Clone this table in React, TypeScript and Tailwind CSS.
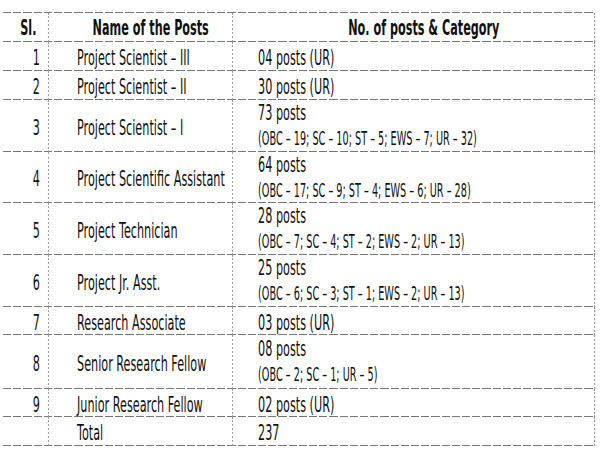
const rows = [
  { sl: '1', name: 'Project Scientist – III', posts: '04 posts (UR)', h: 'h-[29px]' },
  { sl: '2', name: 'Project Scientist – II', posts: '30 posts (UR)', h: 'h-[29px]' },
  {
    sl: '3',
    name: 'Project Scientist – I',
    posts: '73 posts',
    cat: '(OBC – 19; SC – 10; ST – 5; EWS – 7; UR – 32)',
    h: 'h-[52px]',
  },
  {
    sl: '4',
    name: 'Project Scientific Assistant',
    posts: '64 posts',
    cat: '(OBC – 17; SC – 9; ST – 4; EWS – 6; UR – 28)',
    h: 'h-[51px]',
  },
  {
    sl: '5',
    name: 'Project Technician',
    posts: '28 posts',
    cat: '(OBC – 7; SC – 4; ST – 2; EWS – 2; UR – 13)',
    h: 'h-[52px]',
  },
  {
    sl: '6',
    name: 'Project Jr. Asst.',
    posts: '25 posts',
    cat: '(OBC – 6; SC – 3; ST – 1; EWS – 2; UR – 13)',
    h: 'h-[52px]',
  },
  { sl: '7', name: 'Research Associate', posts: '03 posts (UR)', h: 'h-[28px]' },
  {
    sl: '8',
    name: 'Senior Research Fellow',
    posts: '08 posts',
    cat: '(OBC – 2; SC – 1; UR – 5)',
    h: 'h-[54px]',
  },
  { sl: '9', name: 'Junior Research Fellow', posts: '02 posts (UR)', h: 'h-[28px]' },
  { sl: '', name: 'Total', posts: '237', h: 'h-[29px]' },
]

// dashed rule drawn along the bottom of each row
const rule =
  'bg-[repeating-linear-gradient(90deg,#777_0_16px,transparent_16px_20px)] bg-[length:100%_1px] bg-bottom bg-no-repeat'

function App() {
  return (
    <div className="h-[450px] w-[600px] overflow-hidden bg-white">
      <div className="w-[1177px] origin-top-left scale-x-[0.51] pt-[12px] pl-[6px] font-['DejaVu_Sans',sans-serif] text-[#111]">
        <div className="h-px w-[1161px] bg-[repeating-linear-gradient(90deg,#777_0_16px,transparent_16px_20px)]" />
        <div className={`flex h-[29px] w-[1161px] text-[22px] font-bold ${rule}`}>
          <div className="flex w-[90px] items-center justify-center border-r-2 border-dotted border-[#9a9a9a] pl-[11px]">
            Sl.
          </div>
          <div className="flex w-[361px] items-center justify-center border-r-2 border-dotted border-[#9a9a9a] pl-[40px]">
            Name of the Posts
          </div>
          <div className="flex w-[710px] items-center justify-center border-r-2 border-dotted border-[#8a8a8a] pl-[40px]">
            No. of posts &amp; Category
          </div>
        </div>
        {rows.map((r, i) => (
          <div key={i} className={`flex w-[1161px] text-[22px] ${r.h} ${rule}`}>
            <div className="flex w-[90px] items-center justify-end border-r-2 border-dotted border-[#9a9a9a] pr-[16px] pt-[2px]">
              {r.sl}
            </div>
            <div className="flex w-[361px] items-center border-r-2 border-dotted border-[#9a9a9a] pl-[55px] pt-[2px]">
              {r.name}
            </div>
            <div
              className={`flex w-[710px] flex-col justify-center border-r-2 border-dotted border-[#8a8a8a] pl-[49px] ${r.cat ? 'pb-[1px]' : 'pt-[2px]'}`}
            >
              <p className={r.cat ? 'leading-[26px]' : 'leading-[25px]'}>{r.posts}</p>
              {r.cat && <p className="text-[19px] leading-[25px]">{r.cat}</p>}
            </div>
          </div>
        ))}
        <p className="mt-[1px] whitespace-nowrap text-[15px] text-[#777]">
          (Abbreviation: OBC – Other Backward Classes; SC – Scheduled Caste; ST – Scheduled Tribe; EWS – Economically Weaker Section; UR – Unreserved)
        </p>
      </div>
    </div>
  )
}

export default App
